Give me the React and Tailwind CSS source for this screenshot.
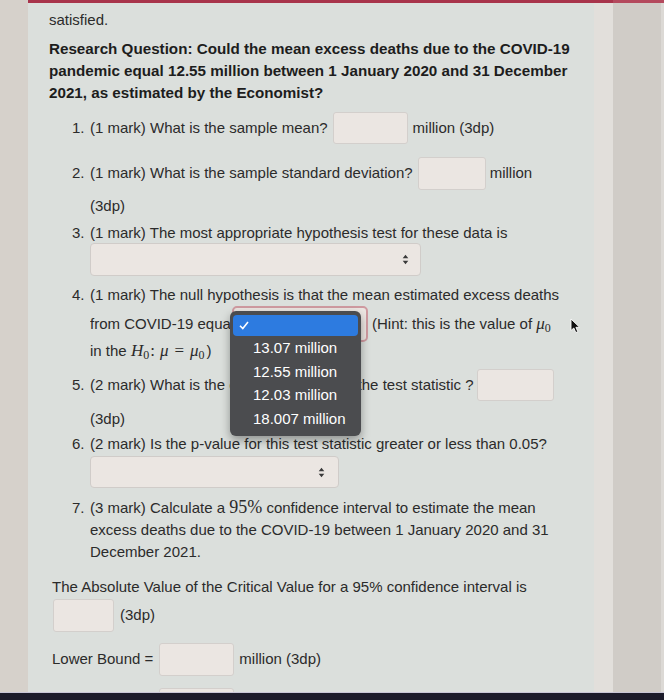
import React from 'react';

const box = 'shrink-0 rounded-[3px] border border-[#d3cfcc] bg-[#ebe6e2]';

function Select({ className }) {
  return (
    <div className={`flex items-center justify-end rounded-[4px] border border-[#d0ccc9] bg-[#ebe6e2] ${className}`}>
      <svg width="7" height="11" viewBox="0 0 7 11">
        <path d="M3.5 0.8 L6.3 4.2 H0.7 Z M3.5 10.2 L6.3 6.8 H0.7 Z" fill="#3a3a3a" />
      </svg>
    </div>
  );
}

function Mu() {
  return <i className="font-['Liberation_Serif',serif] text-[17px]">μ</i>;
}

function Sub0() {
  return <sub className="font-['Liberation_Serif',serif] text-[12px]">0</sub>;
}

const options = ['13.07 million', '12.55 million', '12.03 million', '18.007 million'];

function Popup() {
  return (
    <div className="absolute -left-[4px] top-[3px] z-10 w-[131px] rounded-[6px] bg-[#4b4c4f] px-[3px] pb-[6px] pt-[4px] text-white shadow-[0_4px_10px_rgba(0,0,0,0.35)]">
      <div className="flex h-[21px] items-center rounded-[4px] bg-[#2d7be0] pl-[6px]">
        <svg width="10" height="9" viewBox="0 0 10 9">
          <path d="M1 4.8 L3.8 7.6 L9 1" fill="none" stroke="#fff" strokeWidth="1.6" />
        </svg>
      </div>
      {options.map((o) => (
        <div key={o} className="pl-[20px] leading-[23.5px]">
          {o}
        </div>
      ))}
    </div>
  );
}

export default function App() {
  return (
    <div className="flex h-[700px] w-[664px] flex-col overflow-hidden bg-[#d3cec9] font-['Liberation_Sans',Arial,sans-serif] text-[15px] text-[#2b2b2b]">
      <div className="flex h-[692px]">
        <div className="w-[28px] shrink-0 bg-[#d6d1cb]" />

        <main className="relative w-[566px] shrink-0 overflow-hidden whitespace-nowrap border-t-[3px] border-[#a8344b] bg-[#dbdfdc] pl-[21px]">
          <p className="mt-[6px] leading-[22px]">satisfied.</p>

          <p className="mt-[7px] text-[15.2px] font-bold leading-[22px] text-[#1d1d1d]">
            Research Question: Could the mean excess deaths due to the COVID-19
            <br />
            pandemic equal 12.55 million between 1 January 2020 and 31 December
            <br />
            2021, as estimated by the Economist?
          </p>

          {/* 1 */}
          <div className="mt-[8px] flex h-[32px] items-center pl-[41px]">
            <span className="-ml-[18px] w-[18px] shrink-0">1.</span>
            <span>(1 mark) What is the sample mean?</span>
            <span className={`${box} ml-[5px] h-[32px] w-[75px]`} />
            <span className="ml-[5px]">million (3dp)</span>
          </div>

          {/* 2 */}
          <div className="mt-[13px] flex h-[33px] items-center pl-[41px]">
            <span className="-ml-[18px] w-[18px] shrink-0">2.</span>
            <span>(1 mark) What is the sample standard deviation?</span>
            <span className={`${box} ml-[5px] h-[33px] w-[68px]`} />
            <span className="ml-[4px]">million</span>
          </div>
          <p className="mt-[5px] pl-[41px] leading-[22px]">(3dp)</p>

          {/* 3 */}
          <div className="mt-[6px] pl-[41px]">
            <p className="leading-[20px]">
              <span className="-ml-[18px] inline-block w-[18px]">3.</span>
              (1 mark) The most appropriate hypothesis test for these data is
            </p>
            <Select className="h-[33px] w-[331px] pr-[11px]" />
          </div>

          {/* 4 */}
          <div className="mt-[8px] pl-[41px]">
            <p className="leading-[22px]">
              <span className="-ml-[18px] inline-block w-[18px]">4.</span>
              (1 mark) The null hypothesis is that the mean estimated excess deaths
            </p>
            <div className="flex h-[36px] items-center">
              <span className="w-[142px] shrink-0 overflow-hidden">from COVID-19 equals</span>
              <div className="relative h-[36px] w-[136px] shrink-0 rounded-[5px] border-2 border-[#cf9aa0] bg-[#ece6e2]">
                <Popup />
              </div>
              <span className="ml-[4px]">
                (Hint: this is the value of <Mu />
                <Sub0 />
              </span>
            </div>
            <p className="leading-[18px]">
              in the{' '}
              <span className="font-['Liberation_Serif',serif] text-[17px]">
                <i>H</i>
                <Sub0 />
                <span className="ml-[1px] mr-[5px]">:</span>
                <i>μ</i>
                <span className="mx-[6px]">=</span>
                <i>μ</i>
                <Sub0 />
              </span>
              <span className="ml-[2px]">)</span>
            </p>
          </div>

          {/* 5 */}
          <div className="mt-[9px] flex h-[32px] items-center pl-[41px]">
            <span className="-ml-[18px] w-[18px] shrink-0">5.</span>
            <span>(2 mark) What is the calculated value of the test statistic ?</span>
            <span className={`${box} ml-[3px] h-[32px] w-[77px]`} />
          </div>
          <p className="mt-[7px] pl-[41px] leading-[22px]">(3dp)</p>

          {/* 6 */}
          <div className="mt-[3px] pl-[41px]">
            <p className="leading-[22px]">
              <span className="-ml-[18px] inline-block w-[18px]">6.</span>
              (2 mark) Is the p-value for this test statistic greater or less than 0.05?
            </p>
            <Select className="mt-[1px] h-[32px] w-[249px] pr-[13px]" />
          </div>

          {/* 7 */}
          <p className="mt-[9px] pl-[41px] leading-[22px]">
            <span className="-ml-[18px] inline-block w-[18px]">7.</span>
            (3 mark) Calculate a{' '}
            <span className="font-['Liberation_Serif',serif] text-[18px] leading-none">95%</span> confidence
            interval to estimate the mean
            <br />
            excess deaths due to the COVID-19 between 1 January 2020 and 31
            <br />
            December 2021.
          </p>

          <p className="ml-[3px] mt-[13px] leading-[22px]">
            The Absolute Value of the Critical Value for a 95% confidence interval is
          </p>
          <div className="ml-[3px] mt-[1px] flex h-[33px] items-center">
            <span className={`${box} ml-[1px] h-[33px] w-[61px]`} />
            <span className="ml-[6px]">(3dp)</span>
          </div>

          <div className="ml-[3px] mt-[11px] flex h-[33px] items-center">
            <span>Lower Bound =</span>
            <span className={`${box} ml-[6px] h-[33px] w-[75px]`} />
            <span className="ml-[5px]">million (3dp)</span>
          </div>

          <div className="ml-[3px] mt-[12px] flex h-[33px] items-start">
            <span className="invisible">Upper Bound =</span>
            <span className={`${box} ml-[6px] h-[33px] w-[75px]`} />
          </div>

          {/* mouse pointer */}
          <svg className="absolute left-[542px] top-[315px]" width="11" height="16" viewBox="0 0 11 16">
            <path d="M1 1 L1 12.5 L3.8 10 L5.8 14.6 L7.8 13.7 L5.9 9.3 L9.6 9.3 Z" fill="#111" stroke="#fff" strokeWidth="0.9" />
          </svg>
        </main>

        <div className="w-[19px] shrink-0 border-t-[3px] border-[#a8344b] bg-[#e2dfdb]" />
        <div className="flex flex-1 border-t-[3px] border-[#b4495d] bg-[#d0ccc7]">
          <div className="flex-1" />
          <div className="w-[3px] bg-[#dcd9d5]" />
        </div>
      </div>
      <div className="h-[8px] border-t border-[#c9c6d6] bg-[#1c1b2a]" />
    </div>
  );
}
